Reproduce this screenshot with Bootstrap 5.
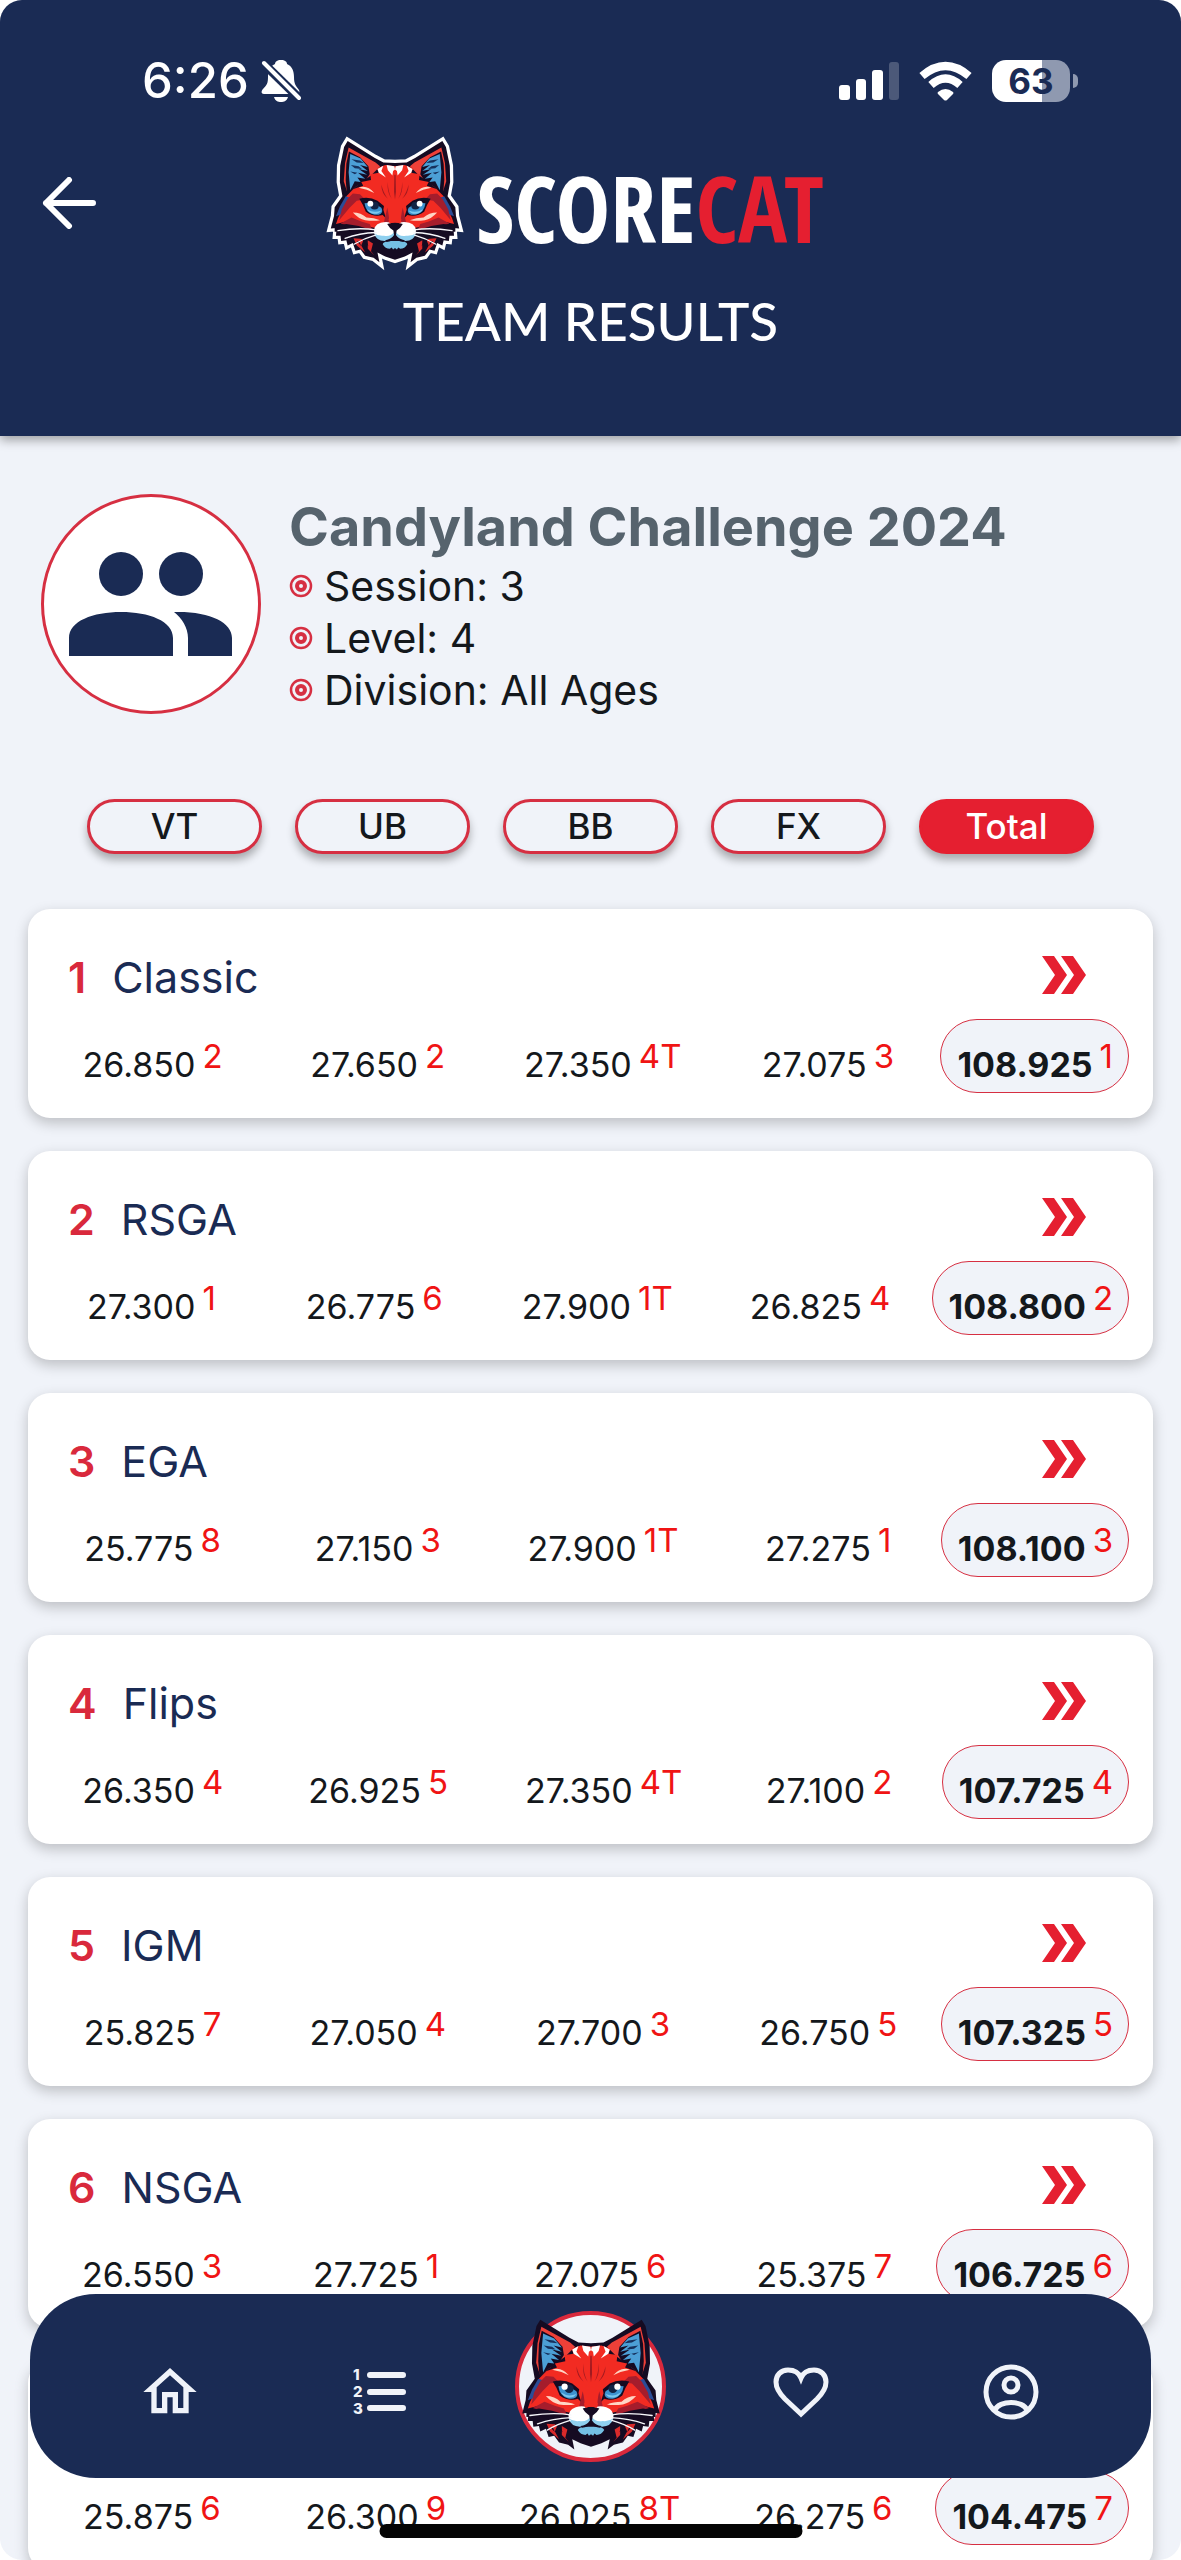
<!DOCTYPE html>
<html lang="en">
<head>
<meta charset="utf-8">
<meta name="viewport" content="width=device-width, initial-scale=1">
<title>ScoreCat - Team Results</title>
<link href="https://cdn.jsdelivr.net/npm/bootstrap@5.3.0/dist/css/bootstrap.min.css" rel="stylesheet">
<style>
  :root { --navy: #1a2b54; --red: #e51f30; --mist: #f0f3f9; --ink: #14181c; }
  body { font-family: Inter, "Liberation Sans", sans-serif; background: #fff; color: var(--ink); }
  .app { background: var(--mist); border-radius: 22px; }
  .app-header { background: var(--navy); padding-bottom: 83px; box-shadow: 0 4px 10px rgba(0,0,0,.35); z-index: 2; }
  .status-bar { padding: 56px 103px 0 142px; }
  .clock { font-size: 49px; line-height: 50px; font-weight: 500; }
  .bell { margin-left: 12px; }
  .wifi { margin: 0 20px; }
  .battery { width: 78px; height: 42px; border-radius: 14px; font-size: 35px; line-height: 42px; font-weight: 700; color: var(--navy); background: linear-gradient(90deg, #fff 64%, #8f99b0 64%); }
  .battery-tip { width: 5px; height: 14px; border-radius: 0 7px 7px 0; background: #8f99b0; margin-left: 3px; }
  .brand-row { margin-top: 26px; height: 142px; }
  .back-col { width: 96px; padding-left: 42px; }
  .end-col { width: 130px; }
  .wordmark { font-family: "Open Sans Condensed", "Open Sans", sans-serif; font-weight: 700; font-size: 92px; line-height: 100px; padding-top: 10px; margin-left: 9px; }
  .wordmark span { color: var(--red); }
  .screen-title { font-family: Lato, sans-serif; font-weight: 500; font-size: 53px; line-height: 64px; margin: 15px 0 0; }
  .results { scrollbar-width: none; }
  .results::-webkit-scrollbar { display: none; }
  .meet { padding: 58px 41px 0; gap: 28px; }
  .meet-avatar { width: 220px; height: 220px; border: 3px solid #d62f42; }
  .meet-name { font-size: 54px; line-height: 66px; font-weight: 700; color: #56636d; margin: 0; }
  .meet-facts { font-size: 41px; line-height: 52px; }
  .meet-facts li { gap: 11px; }
  .filters { margin-top: 83px; gap: 33px; padding: 0 87px; }
  .filters .btn { flex: 0 1 175px; height: 55px; padding: 0; border: 3px solid #d62f42; background: var(--mist); color: var(--ink); font-size: 35px; line-height: 49px; font-weight: 500; box-shadow: 0 6px 9px rgba(0,0,0,.3); }
  .filters .btn.active { background: var(--red); border-color: var(--red); color: #fff; }
  .team-list { padding: 55px 28px 0; gap: 33px; }
  .team { border: 0; border-radius: 22px; padding: 44px 24px 25px 12px; box-shadow: 0 5px 14px rgba(0,0,0,.22); }
  .team-head { padding: 0 43px 0 28px; font-size: 43px; line-height: 48px; }
  .team-head h2 { font-size: 43px; line-height: 48px; font-weight: 400; color: var(--navy); margin: 0 0 0 26px; }
  .rank { color: #d9293c; font-weight: 600; }
  .scores { margin-top: 18px; font-size: 34px; line-height: 54px; }
  .scores > div { padding: 19px 15px 1px; white-space: nowrap; }
  .scores sup { position: static; font-size: 33px; line-height: 0; vertical-align: 9px; color: #f01414; margin-left: 7px; font-weight: 400; }
  .scores > .total { padding: 18px 15px 0 16px; border: 1px solid #d62f42; border-radius: 37px; background: var(--mist); font-weight: 700; }
  .tabbar { left: 30px; right: 30px; bottom: 82px; height: 184px; padding: 0 35px; border-radius: 66px; background: var(--navy); z-index: 3; }
  .tabbar a { color: var(--mist); }
  .tab-icon { padding-top: 12px; }
  .mascot { width: 151px; height: 151px; border: 4px solid #d9293c; background: var(--mist); }
  .mascot svg { flex: none; }
  .home-indicator { bottom: 22px; width: 423px; height: 14px; background: #050505; z-index: 4; }
</style>
<script src="https://cdn.jsdelivr.net/npm/bootstrap@5.3.0/dist/js/bootstrap.bundle.min.js"></script>
</head>
<body>

<svg width="0" height="0" class="position-absolute" aria-hidden="true">
  <defs>
    <path id="cat-edge" d="M0 112L-36 110L-62 96L-146 44L-157 62L-169 120L-170 170L-162 214L-186 248L-188 275L-198 314L-180 312L-182 336L-168 336L-166 352L-150 350L-146 366L-130 358L-122 382L-106 378L-92 398L-66 404L-48 418L-54 388L-30 400L0 410
      L30 400L54 388L48 418L66 404L92 398L106 378L122 382L130 358L146 366L150 350L166 352L168 336L182 336L180 312L198 314L188 275L186 248L162 214L170 170L169 120L157 62L146 44L62 96L36 110Z"/>
    <g id="cat-half">
      <path fill="#ee4038" d="M-143 64L-60 110L-46 122L-74 150L-96 166L-120 184L-146 206L-158 168L-154 112Z"/>
      <path fill="#150b22" d="M-142 76L-108 94L-82 122L-78 146L-92 168L-120 184L-148 210L-152 164L-150 114Z"/>
      <path fill="#4c9fd6" d="M-138 84L-106 98L-84 124L-108 118L-84 136L-112 130L-86 148L-114 142L-92 160L-116 156L-106 170L-124 168L-138 196L-143 140Z"/>
      <path fill="#16305c" d="M-134 100L-108 104L-96 112L-118 110ZM-136 118L-112 122L-102 130L-124 128ZM-138 138L-116 142L-124 146Z"/>
      <path fill="#f22b22" d="M0 122L-30 118L-56 128L-50 142L-76 146L-74 164L-104 170L-98 182L-128 192L-150 214L-160 250L-176 282L-182 300L-150 292L-110 302L-60 312L0 302Z"/>
      <path fill="#2b4c96" d="M-152 214L-170 246L-182 276L-160 268L-140 240L-134 220Z"/>
      <path fill="#a51d2c" d="M-146 222L-130 206L-108 208L-92 224L-118 228L-140 250L-172 288L-164 254ZM-168 298L-134 280L-104 292L-78 300L-70 318L-120 312Z"/>
      <path fill="#150b22" d="M-186 306L-150 300L-112 306L-72 318L-60 326L-140 322L-186 324Z"/>
      <path fill="#d92a2a" d="M-128 344L-96 346L-104 366L-92 388L-118 366ZM-84 350L-68 360L-74 384L-64 396L-84 376Z"/>
      <path fill="#150b22" d="M-110 338L-92 338L-82 368ZM-118 352L-110 354L-104 368Z"/>
      <path fill="#fff" d="M-2 122L-26 118L-22 134L-8 150L-6 136L0 132ZM-54 130L-36 120L-42 136L-28 156L-50 142Z"/>
      <path fill="#ffd5c4" d="M-112 188Q-86 178 -64 204Q-86 192 -112 188ZM-130 264Q-104 264 -88 280Q-64 280 -46 288Q-66 292 -92 288Q-112 284 -130 264Z"/>
      <path fill="#a01a20" d="M-2 148L0 148L0 224L-3 200ZM-22 170Q-22 200 -10 222Q-26 202 -22 170ZM-42 178Q-36 204 -22 222Q-42 206 -42 178Z"/>
      <path fill="#150b22" d="M-110 222Q-80 214 -54 228L-34 244L-36 256L-28 282L-38 272Q-66 280 -90 262Q-98 240 -110 222Z"/>
      <path fill="#3d93d0" d="M-94 236Q-66 232 -42 250Q-36 262 -44 268Q-54 274 -68 270Q-90 264 -94 236Z"/>
      <ellipse cx="-63" cy="243" rx="13" ry="12" fill="#122445"/>
      <path fill="#7cc8ee" d="M-86 254Q-66 268 -42 258Q-50 270 -66 268Q-80 266 -86 254Z"/>
      <circle cx="-76" cy="237" r="9" fill="#fff"/>
      <path fill="#a51d2c" d="M-24 250Q-16 280 -20 298L-34 294Q-28 270 -24 250Z"/>
      <path fill="#fff" d="M-6 304Q-16 288 -44 296Q-68 304 -64 328Q-58 346 -34 346Q-10 344 0 326Z"/>
      <path fill="#8fd0ef" d="M0 322Q-12 340 -34 336Q-52 338 -64 328Q-58 352 -32 352Q-12 350 0 334Z"/>
      <path fill="#74bfe4" d="M0 352L-20 352Q-36 354 -38 362Q-30 376 -16 376L-10 372L-6 378L0 374Z"/>
      <path fill="none" stroke="#f7f7fb" stroke-width="4" stroke-linecap="round" d="M-58 318Q-110 310 -176 320M-58 326Q-110 328 -154 344M-60 334Q-96 344 -126 362"/>
    </g>
    <g id="cat-face">
      <use href="#cat-edge" fill="#150b22"/>
      <use href="#cat-half"/>
      <use href="#cat-half" transform="scale(-1 1)"/>
      <path fill="#150b22" d="M-24 300Q0 290 24 300Q18 312 5 320L3 334Q12 348 30 350L26 355Q8 354 0 342Q-8 354 -26 355L-30 350Q-12 348 -3 334L-5 320Q-18 312 -24 300Z"/>
      <path fill="#f22b22" d="M-20 284L20 284L16 298Q0 292 -16 298Z"/>
    </g>
    <path id="chevrons" d="M0 0H12L25 19L12 38H0L13 19ZM19 0H31L44 19L31 38H19L32 19Z"/>
    <g id="target" fill="none" stroke="#d62f42">
      <circle cx="12" cy="12" r="10" stroke-width="2.5"/>
      <circle cx="12" cy="12" r="4" stroke-width="4"/>
    </g>
  </defs>
</svg>

<div class="app vh-100 d-flex flex-column overflow-hidden position-relative">

  <header class="app-header position-relative text-white">
    <div class="status-bar d-flex align-items-center justify-content-between">
      <div class="d-flex align-items-center">
        <span class="clock">6:26</span>
        <svg class="bell" width="40" height="44" viewBox="0 0 40 44" aria-label="Silent">
          <path fill="#fff" d="M20 1C24 1 26 3 26 5C31 7 33 12 33 18C33 25 35 27 38 31C39 34 38 35 36 35H3C0 35 0 32 2 30C6 26 7 24 7 18C7 12 9 7 14 5C14 3 16 1 20 1ZM13 38H27C26 42 23 43 20 43S14 42 13 38Z"/>
          <path stroke="#1a2b54" stroke-width="9" d="M0 2L40 41"/>
          <path stroke="#fff" stroke-width="4" stroke-linecap="round" d="M3 4L38 39"/>
        </svg>
      </div>
      <div class="d-flex align-items-center">
        <svg width="60" height="40" viewBox="0 0 60 40" fill="#fff" aria-label="Signal">
          <rect x="0" y="24" width="11" height="15" rx="3"/><rect x="17" y="18" width="10" height="21" rx="3"/><rect x="33" y="9" width="11" height="30" rx="3"/><rect x="50" y="1" width="10" height="38" rx="3" opacity=".22"/>
        </svg>
        <svg class="wifi" width="53" height="40" viewBox="0 0 53 40" aria-label="Wi-Fi">
          <g fill="none" stroke="#fff" stroke-width="8"><path d="M3 15Q26.500 -5 50 15"/><path d="M12 24Q26.500 11 41 24"/></g>
          <path fill="#fff" d="M19 31Q26.500 25 34 31Q35 32 34 33L28 39Q26.500 40 25 39L19 33Q18 32 19 31Z"/>
        </svg>
        <div class="battery text-center">63</div><div class="battery-tip"></div>
      </div>
    </div>

    <div class="brand-row d-flex align-items-center">
      <div class="back-col">
        <a href="#" class="d-block" aria-label="Back">
          <svg width="54" height="52" viewBox="0 0 54 52" fill="none" stroke="#fff" stroke-width="6" stroke-linecap="round" stroke-linejoin="round"><path d="M51 26H4M27 3L4 26L27 49"/></svg>
        </a>
      </div>
      <div class="flex-fill d-flex align-items-center justify-content-center">
        <svg width="144" height="138" viewBox="-222 26 444 418" aria-label="ScoreCat mascot">
          <use href="#cat-edge" fill="#fff" stroke="#fff" stroke-width="20" stroke-miterlimit="3"/>
          <use href="#cat-face"/>
        </svg>
        <div class="wordmark">SCORE<span>CAT</span></div>
      </div>
      <div class="end-col"></div>
    </div>
    <h1 class="screen-title text-center">TEAM RESULTS</h1>
  </header>

  <main class="results flex-fill overflow-auto">
    <section class="meet d-flex">
      <div class="meet-avatar rounded-circle bg-white d-flex align-items-center justify-content-center flex-shrink-0">
        <svg width="164" height="104" viewBox="0 0 164 104" fill="#1a2b54" aria-label="Team"><circle cx="52" cy="22" r="22"/><circle cx="112" cy="22" r="22"/><path d="M0 104V86C0 69 24 60 52 60S104 69 104 86V104ZM119 104V86C119 76 113 66 105 60C140 59 163 70 163 86V104Z"/></svg>
      </div>
      <div>
        <h2 class="meet-name">Candyland Challenge 2024</h2>
        <ul class="meet-facts list-unstyled mb-0">
          <li class="d-flex align-items-center"><svg width="24" height="24"><use href="#target"/></svg>Session: 3</li>
          <li class="d-flex align-items-center"><svg width="24" height="24"><use href="#target"/></svg>Level: 4</li>
          <li class="d-flex align-items-center"><svg width="24" height="24"><use href="#target"/></svg>Division: All Ages</li>
        </ul>
      </div>
    </section>

    <div class="filters d-flex justify-content-center">
      <button type="button" class="btn rounded-pill">VT</button>
      <button type="button" class="btn rounded-pill">UB</button>
      <button type="button" class="btn rounded-pill">BB</button>
      <button type="button" class="btn rounded-pill">FX</button>
      <button type="button" class="btn rounded-pill active">Total</button>
    </div>

    <section class="team-list d-flex flex-column">
      <article class="team card">
        <div class="team-head d-flex align-items-center"><span class="rank">1</span><h2>Classic</h2><a href="#" class="ms-auto mb-1 d-flex" aria-label="Classic details"><svg width="44" height="38" fill="#e51f30"><use href="#chevrons"/></svg></a></div>
        <div class="scores d-flex text-center">
          <div class="col">26.850<sup>2</sup></div><div class="col">27.650<sup>2</sup></div><div class="col">27.350<sup>4T</sup></div><div class="col">27.075<sup>3</sup></div><div class="total">108.925<sup>1</sup></div>
        </div>
      </article>
      <article class="team card">
        <div class="team-head d-flex align-items-center"><span class="rank">2</span><h2>RSGA</h2><a href="#" class="ms-auto mb-1 d-flex" aria-label="RSGA details"><svg width="44" height="38" fill="#e51f30"><use href="#chevrons"/></svg></a></div>
        <div class="scores d-flex text-center">
          <div class="col">27.300<sup>1</sup></div><div class="col">26.775<sup>6</sup></div><div class="col">27.900<sup>1T</sup></div><div class="col">26.825<sup>4</sup></div><div class="total">108.800<sup>2</sup></div>
        </div>
      </article>
      <article class="team card">
        <div class="team-head d-flex align-items-center"><span class="rank">3</span><h2>EGA</h2><a href="#" class="ms-auto mb-1 d-flex" aria-label="EGA details"><svg width="44" height="38" fill="#e51f30"><use href="#chevrons"/></svg></a></div>
        <div class="scores d-flex text-center">
          <div class="col">25.775<sup>8</sup></div><div class="col">27.150<sup>3</sup></div><div class="col">27.900<sup>1T</sup></div><div class="col">27.275<sup>1</sup></div><div class="total">108.100<sup>3</sup></div>
        </div>
      </article>
      <article class="team card">
        <div class="team-head d-flex align-items-center"><span class="rank">4</span><h2>Flips</h2><a href="#" class="ms-auto mb-1 d-flex" aria-label="Flips details"><svg width="44" height="38" fill="#e51f30"><use href="#chevrons"/></svg></a></div>
        <div class="scores d-flex text-center">
          <div class="col">26.350<sup>4</sup></div><div class="col">26.925<sup>5</sup></div><div class="col">27.350<sup>4T</sup></div><div class="col">27.100<sup>2</sup></div><div class="total">107.725<sup>4</sup></div>
        </div>
      </article>
      <article class="team card">
        <div class="team-head d-flex align-items-center"><span class="rank">5</span><h2>IGM</h2><a href="#" class="ms-auto mb-1 d-flex" aria-label="IGM details"><svg width="44" height="38" fill="#e51f30"><use href="#chevrons"/></svg></a></div>
        <div class="scores d-flex text-center">
          <div class="col">25.825<sup>7</sup></div><div class="col">27.050<sup>4</sup></div><div class="col">27.700<sup>3</sup></div><div class="col">26.750<sup>5</sup></div><div class="total">107.325<sup>5</sup></div>
        </div>
      </article>
      <article class="team card">
        <div class="team-head d-flex align-items-center"><span class="rank">6</span><h2>NSGA</h2><a href="#" class="ms-auto mb-1 d-flex" aria-label="NSGA details"><svg width="44" height="38" fill="#e51f30"><use href="#chevrons"/></svg></a></div>
        <div class="scores d-flex text-center">
          <div class="col">26.550<sup>3</sup></div><div class="col">27.725<sup>1</sup></div><div class="col">27.075<sup>6</sup></div><div class="col">25.375<sup>7</sup></div><div class="total">106.725<sup>6</sup></div>
        </div>
      </article>
      <article class="team card">
        <div class="team-head d-flex align-items-center"><span class="rank">&nbsp;</span></div>
        <div class="scores d-flex text-center">
          <div class="col">25.875<sup>6</sup></div><div class="col">26.300<sup>9</sup></div><div class="col">26.025<sup>8T</sup></div><div class="col">26.275<sup>6</sup></div><div class="total">104.475<sup>7</sup></div>
        </div>
      </article>
    </section>
  </main>

  <nav class="tabbar position-absolute d-flex align-items-center" aria-label="Main">
    <a href="#" class="tab-icon col d-flex justify-content-center" aria-label="Home"><svg width="64" height="64" viewBox="0 0 24 24" fill="currentColor"><path d="M12 5.700L17 10.200V18H15V12H9V18H7V10.200ZM12 3L2 12H5V20H11V14H13V20H19V12H22Z"/></svg></a>
    <a href="#" class="tab-icon col d-flex justify-content-center" aria-label="Rankings"><svg width="54" height="54" viewBox="0 0 54 54" fill="currentColor" stroke="currentColor"><g font-size="15" font-weight="800" stroke="none"><text x="0" y="15">1</text><text x="0" y="32">2</text><text x="0" y="49">3</text></g><path stroke-width="6" stroke-linecap="round" d="M17 10H50M17 27H50M17 43H50"/></svg></a>
    <a href="#" class="col d-flex justify-content-center" aria-label="ScoreCat"><span class="mascot rounded-circle d-flex align-items-center justify-content-center"><svg width="150" height="144" viewBox="-216 28 432 414"><use href="#cat-face"/></svg></span></a>
    <a href="#" class="tab-icon col d-flex justify-content-center" aria-label="Favorites"><svg width="58" height="54" viewBox="0 0 58 54" fill="none" stroke="currentColor" stroke-width="5"><path d="M29 49L13 34C7 28 4 23 4 17C4 10 9 5 16 5C22 5 27 8 29 13C31 8 36 5 42 5C49 5 54 10 54 17C54 23 51 28 45 34Z"/></svg></a>
    <a href="#" class="tab-icon col d-flex justify-content-center" aria-label="Account"><svg width="56" height="56" viewBox="0 0 56 56" fill="none" stroke="currentColor" stroke-width="5"><circle cx="28" cy="28" r="25"/><circle cx="28" cy="21" r="7"/><path d="M12 46C16 36 40 36 44 46"/></svg></a>
  </nav>
  <div class="home-indicator position-absolute start-50 translate-middle-x rounded-pill"></div>
</div>
</body>
</html>
